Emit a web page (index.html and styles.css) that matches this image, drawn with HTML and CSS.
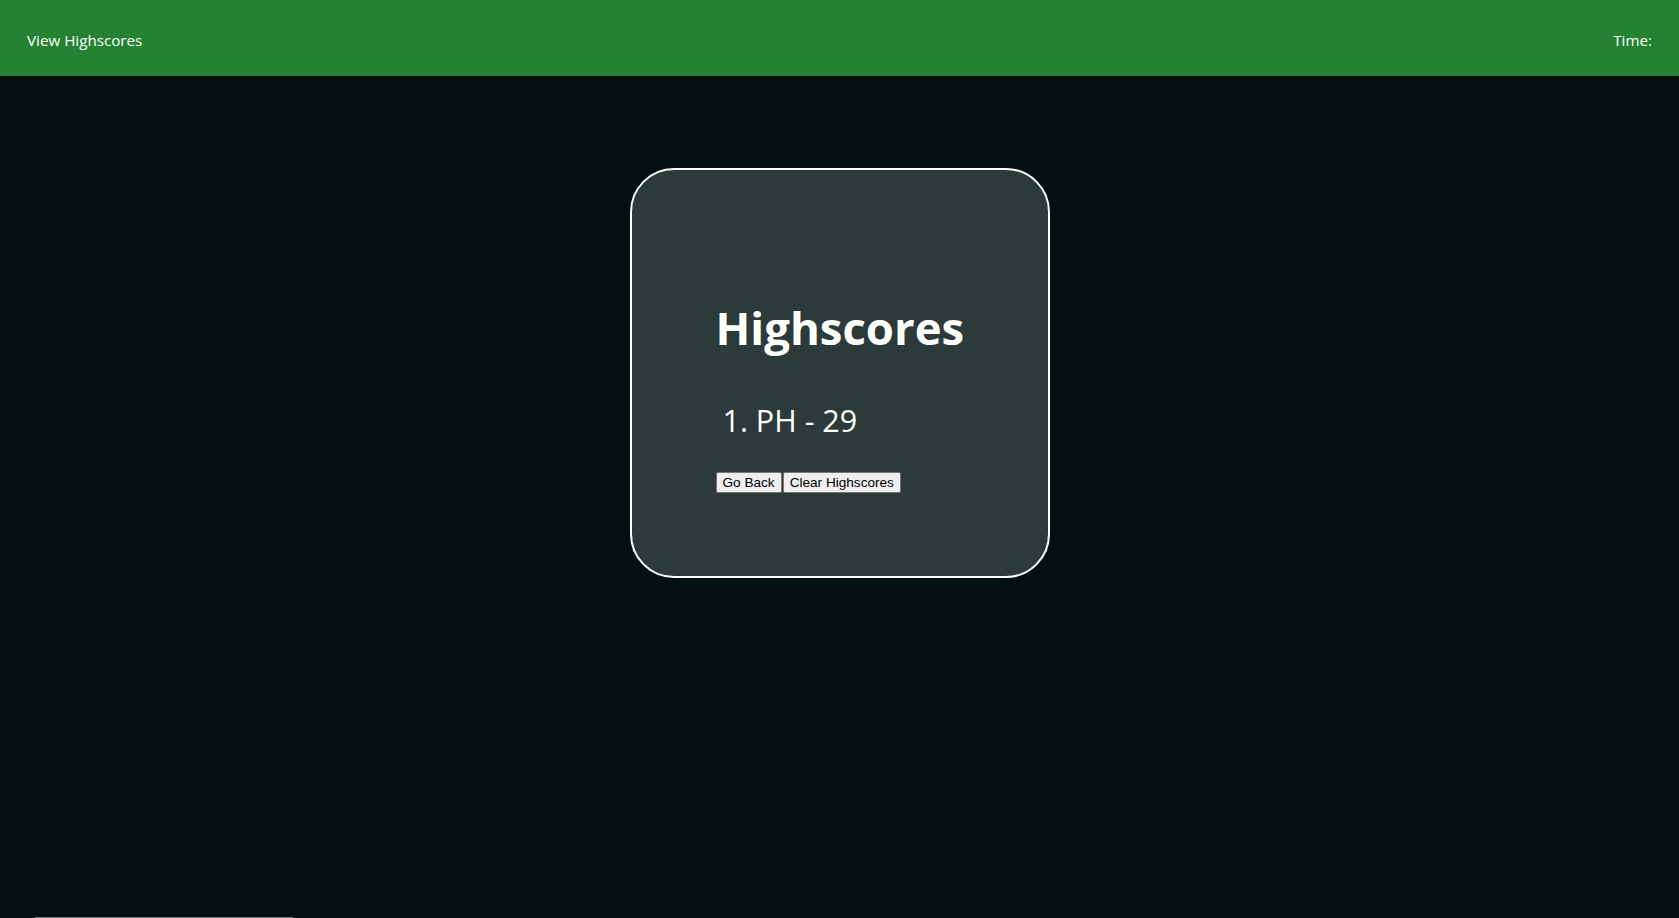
FILE: index.html
```html
<!DOCTYPE html>
<html lang="en">
<head>
<meta charset="utf-8">
<title>Code Quiz</title>
<link rel="stylesheet" href="styles.css">
</head>
<body>
<header class="topbar">
  <a class="topbar-link">View Highscores</a>
  <span class="timer">Time:</span>
</header>
<main class="stage">
  <section class="card">
    <h1 class="card-title">Highscores</h1>
    <ol class="score-list">
      <li class="score-item">1. PH - 29</li>
    </ol>
    <div class="actions">
      <button class="btn" type="button">Go Back</button>
      <button class="btn" type="button">Clear Highscores</button>
    </div>
  </section>
</main>
<div class="scroll-track"><div class="scroll-thumb"></div></div>
</body>
</html>
```
FILE: styles.css
```css
html, body {
  margin: 0;
  padding: 0;
}
body {
  height: 100vh;
  overflow: hidden;
  background: #040f0f;
  color: #fcfffc;
  font-family: "Open Sans", "Noto Sans", sans-serif;
  display: flex;
  flex-direction: column;
}
.topbar {
  box-sizing: border-box;
  height: 76px;
  flex: 0 0 76px;
  background: #248232;
  display: flex;
  align-items: center;
  justify-content: space-between;
  padding: 3px 27px 0 27px;
  font-size: 15.2px;
}
.topbar-link {
  color: #fcfffc;
  text-decoration: none;
}
.timer {
  color: #fcfffc;
}
.stage {
  flex: 1;
  display: flex;
  justify-content: center;
  align-items: flex-start;
  padding-top: 92px;
}
.card {
  box-sizing: border-box;
  width: 420px;
  height: 410px;
  border: 2px solid #fcfffc;
  border-radius: 44px;
  background: #2d3a3a;
  padding: 129px 20px 0 84px;
}
.card-title {
  margin: 0;
  font-size: 45.5px;
  line-height: 56px;
  font-weight: 700;
}
.score-list {
  list-style: none;
  margin: 45px 0 0 0;
  padding: 0 0 0 7px;
}
.score-item {
  font-size: 30.5px;
  line-height: 40px;
}
.actions {
  display: flex;
  gap: 1px;
  margin-top: 32px;
}
.btn {
  font-family: "Liberation Sans", Arial, sans-serif;
  font-size: 13.6px;
  line-height: 16px;
  height: 21px;
  padding: 1px 6px;
  border: 1px solid #767676;
  border-radius: 2px;
  background: #efefef;
  color: #000;
  margin: 0;
}
.scroll-track {
  height: 1px;
  flex: 0 0 1px;
  display: flex;
}
.scroll-thumb {
  margin-left: 35px;
  width: 258px;
  background: #7a7f7f;
}
```
